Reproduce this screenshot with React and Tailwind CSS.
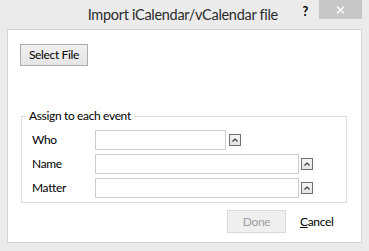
import React from "react";

function UpBtn() {
  return (
    <div className="flex h-[12px] w-[12px] items-center justify-center border border-[#707070] bg-gradient-to-b from-[#f4f4f4] to-[#e2e2e2]">
      <svg width="8" height="6" viewBox="0 0 8 6">
        <polyline points="1.5,4.5 4,2 6.5,4.5" fill="none" stroke="#404040" strokeWidth="1.2" />
      </svg>
    </div>
  );
}

export default function App() {
  return (
    <div
      className="flex h-[251px] w-[369px] flex-col bg-[#ebebeb] text-[12px] tracking-[-0.35px] text-[#1a1a1a]"
      style={{ fontFamily: "Lato, 'Liberation Sans', sans-serif" }}
    >
      <div className="flex h-[29px] shrink-0 items-start">
        <div className="flex h-[29px] flex-1 items-center justify-center pl-[63px] pt-[1px] text-[14.5px] tracking-[-0.3px] text-[#2b2b2b]">
          Import iCalendar/vCalendar file
        </div>
        <div className="flex items-start">
          <div className="mt-[6px] mr-[11px] text-[12.5px] font-bold leading-none text-black">?</div>
          <div className="mr-[7px] flex h-[19px] w-[43px] items-center justify-center bg-[#c7c7c7]">
            <svg width="9" height="8" viewBox="0 0 9 8">
              <line x1="1" y1="0.5" x2="8" y2="7.5" stroke="#fff" strokeWidth="1.2" />
              <line x1="8" y1="0.5" x2="1" y2="7.5" stroke="#fff" strokeWidth="1.2" />
            </svg>
          </div>
        </div>
      </div>
      <div className="mx-[7px] mb-[8px] flex flex-1 flex-col border border-[#d4d4d4] bg-white pl-[12px] pt-[14px]">
        <button className="flex h-[22px] w-[68px] items-center justify-center border border-[#adadad] bg-gradient-to-b from-[#f0f0f0] to-[#e5e5e5] text-[12px] text-black">
          Select File
        </button>
        <fieldset className="ml-[1px] mt-[43px] h-[94px] w-[326px] border border-[#dcdcdc] px-0 pb-[4px]">
          <legend className="ml-[4px] px-[3px] text-[12px] leading-[14px] text-black">Assign to each event</legend>
          <div className="mt-[7px] flex flex-col gap-[4px] px-[10px]">
            <div className="flex items-center">
              <div className="w-[63px] text-black">Who</div>
              <div className="h-[20px] w-[131px] border border-[#cccccc]" />
              <div className="ml-[3px]"><UpBtn /></div>
            </div>
            <div className="flex items-center">
              <div className="w-[63px] text-black">Name</div>
              <div className="h-[20px] w-[204px] border border-[#cccccc]" />
              <div className="ml-[2px]"><UpBtn /></div>
            </div>
            <div className="flex items-center">
              <div className="w-[63px] text-black">Matter</div>
              <div className="h-[20px] w-[204px] border border-[#cccccc]" />
              <div className="ml-[2px]"><UpBtn /></div>
            </div>
          </div>
        </fieldset>
        <div className="mt-[7px] flex items-center">
          <div className="ml-[207px] flex h-[23px] w-[59px] items-center justify-center border border-[#d9d9d9] bg-[#efefef] text-[#a0a0a0]">
            Done
          </div>
          <div className="ml-[14px] text-black">
            <span className="underline">C</span>ancel
          </div>
        </div>
      </div>
    </div>
  );
}
